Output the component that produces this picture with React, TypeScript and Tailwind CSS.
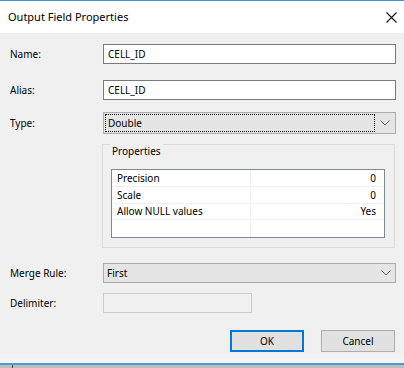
import React from 'react';

const Chevron: React.FC = () => (
  <svg width="10" height="6" viewBox="0 0 10 6" className="shrink-0">
    <path d="M0.5 0.5 L5 5 L9.5 0.5" fill="none" stroke="#606060" strokeWidth="1" />
  </svg>
);

const rows = [
  { name: 'Precision', value: '0' },
  { name: 'Scale', value: '0' },
  { name: 'Allow NULL values', value: 'Yes' },
  { name: '', value: '' },
];

export default function App() {
  return (
    <div
      className="w-[404px] h-[368px] overflow-hidden bg-[#f0f0f0] flex flex-col text-[10px] text-black leading-[14px]"
      style={{ fontFamily: '"Segoe UI", "Noto Sans", Arial, sans-serif' }}
    >
      {/* window frame top */}
      <div className="h-px bg-[#4c8fd0] shrink-0" />

      {/* title bar */}
      <div className="h-[32px] shrink-0 bg-white flex items-center justify-between pl-[8px] pr-[7px]">
        <span className="text-[11px]">Output Field Properties</span>
        <svg width="11" height="11" viewBox="0 0 11 11">
          <path d="M0.5 0.5 L10.5 10.5 M10.5 0.5 L0.5 10.5" stroke="#111" strokeWidth="1.1" />
        </svg>
      </div>

      {/* body */}
      <div className="flex-1 flex flex-col pl-[10px] pr-[8px] pt-[11px]">
        <div className="flex items-center">
          <span className="w-[93px]">Name:</span>
          <div className="w-[293px] h-[20px] bg-white border border-[#7a7a7a] flex items-center pl-[4px]">CELL_ID</div>
        </div>

        <div className="flex items-center mt-[16px]">
          <span className="w-[93px]">Alias:</span>
          <div className="w-[293px] h-[20px] bg-white border border-[#7a7a7a] flex items-center pl-[4px]">CELL_ID</div>
        </div>

        <div className="flex items-center mt-[12px]">
          <span className="w-[93px]">Type:</span>
          <div className="w-[293px] h-[22px] bg-[#e5e5e5] border border-[#adadad] flex items-center p-px">
            <div className="flex-1 h-full border border-dotted border-black flex items-center pl-[2px]">Double</div>
            <div className="w-[19px] flex justify-center">
              <Chevron />
            </div>
          </div>
        </div>

        {/* properties group */}
        <div className="mt-[10px] ml-[92px] w-[293px] h-[104px] border border-[#dcdcdc] flex flex-col">
          <div className="h-0 relative">
            <span className="absolute left-[7px] -top-[1px] px-[2px] bg-[#f0f0f0] leading-[14px]">Properties</span>
          </div>
          <div className="mt-[24px] ml-[8px] w-[274px] h-[69px] border border-[#828790] bg-white flex flex-col">
            {rows.map((r, i) => (
              <div key={i} className="h-[17px] flex border-b border-[#f0f0f0] last:border-b-0">
                <div className="w-[139px] border-r border-[#f0f0f0] pl-[5px] flex items-center">{r.name}</div>
                <div className="flex-1 pr-[8px] flex items-center justify-end">{r.value}</div>
              </div>
            ))}
          </div>
        </div>

        <div className="flex items-center mt-[15px]">
          <span className="w-[93px]">Merge Rule:</span>
          <div className="w-[293px] h-[20px] bg-[#e5e5e5] border border-[#adadad] flex items-center pl-[3px]">
            <span className="flex-1">First</span>
            <div className="w-[19px] flex justify-center">
              <Chevron />
            </div>
          </div>
        </div>

        <div className="flex items-center mt-[10px]">
          <span className="w-[93px]">Delimiter:</span>
          <div className="w-[149px] h-[20px] bg-[#f0f0f0] border border-[#cccccc]" />
        </div>

        <div className="flex justify-end gap-[17px] mt-[17px] pr-[1px]">
          <button className="w-[74px] h-[22px] bg-[#e1e1e1] border-2 border-[#0078d7] flex items-center justify-center">OK</button>
          <button className="w-[74px] h-[22px] bg-[#e1e1e1] border border-[#adadad] flex items-center justify-center">Cancel</button>
        </div>
      </div>

      {/* bottom edge with window below */}
      <div className="h-[9px] shrink-0 bg-[#f3f3f3]" />
      <div className="h-[2px] shrink-0 bg-[#4c9ad6]" />
      <div className="h-[3px] shrink-0 bg-[#bdbdbd] flex">
        <div className="ml-[12px] w-px bg-[#444]" />
      </div>
    </div>
  );
}
